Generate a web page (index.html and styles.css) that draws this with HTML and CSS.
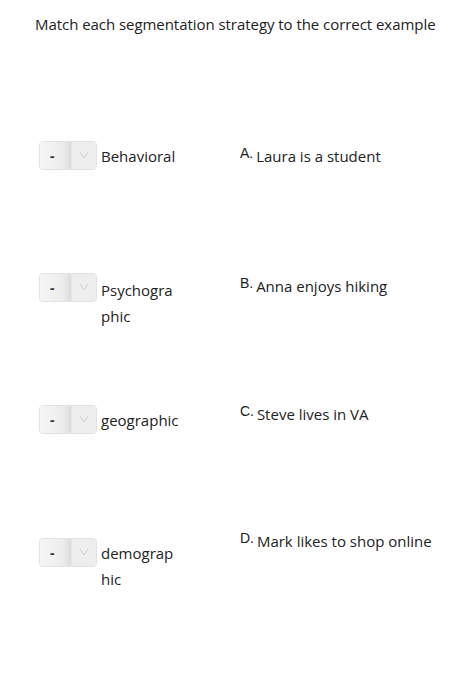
FILE: index.html
```html
<!DOCTYPE html>
<html>
<head>
<meta charset="utf-8">
<link rel="stylesheet" href="styles.css">
</head>
<body>
<div class="page">
  <h1 class="title">Match each segmentation strategy to the correct example</h1>
  <div class="rows">
    <div class="row row-1">
      <div class="select"><span class="select-value">-</span><span class="select-arrow"><svg width="10" height="8" viewBox="0 0 10 8"><polyline points="1,1 5,7 9,1" fill="none" stroke="#cfcfcf" stroke-width="1"/></svg></span></div>
      <div class="label">Behavioral</div>
      <div class="answer"><span class="letter">A.</span> Laura is a student</div>
    </div>
    <div class="row row-2">
      <div class="select"><span class="select-value">-</span><span class="select-arrow"><svg width="10" height="8" viewBox="0 0 10 8"><polyline points="1,1 5,7 9,1" fill="none" stroke="#cfcfcf" stroke-width="1"/></svg></span></div>
      <div class="label">Psychographic</div>
      <div class="answer"><span class="letter">B.</span> Anna enjoys hiking</div>
    </div>
    <div class="row row-3">
      <div class="select"><span class="select-value">-</span><span class="select-arrow"><svg width="10" height="8" viewBox="0 0 10 8"><polyline points="1,1 5,7 9,1" fill="none" stroke="#cfcfcf" stroke-width="1"/></svg></span></div>
      <div class="label">geographic</div>
      <div class="answer"><span class="letter">C.</span> Steve lives in VA</div>
    </div>
    <div class="row row-4">
      <div class="select"><span class="select-value">-</span><span class="select-arrow"><svg width="10" height="8" viewBox="0 0 10 8"><polyline points="1,1 5,7 9,1" fill="none" stroke="#cfcfcf" stroke-width="1"/></svg></span></div>
      <div class="label">demographic</div>
      <div class="answer"><span class="letter">D.</span> Mark likes to shop online</div>
    </div>
  </div>
</div>
</body>
</html>
```

FILE: styles.css
```css
html, body {
  margin: 0;
  padding: 0;
  background: #ffffff;
}

body {
  font-family: "Open Sans", "Noto Sans", sans-serif;
  color: #222222;
}

.page {
  padding: 14px 0 0 35px;
}

.title {
  margin: 0;
  font-size: 15px;
  line-height: 20px;
  font-weight: 400;
  color: #222222;
  letter-spacing: -0.05px;
}

.rows {
  margin-top: 107px;
  padding-left: 4px;
}

.row {
  display: flex;
  align-items: flex-start;
  height: 132px;
}

.row-3 {
  height: 133px;
}

.select {
  flex: none;
  display: flex;
  width: 58px;
  height: 29px;
  box-sizing: border-box;
  border: 1px solid #e2e2e2;
  border-radius: 4px;
  overflow: hidden;
}

.select-value {
  width: 31px;
  background: linear-gradient(to right, #f6f6f6 0%, #ececec 75%, #dcdcdc 100%);
  font-size: 14px;
  font-weight: 700;
  line-height: 27px;
  padding-left: 10px;
  box-sizing: border-box;
  color: #333333;
}

.select-arrow {
  flex: 1;
  display: flex;
  justify-content: center;
  align-items: flex-start;
  padding-top: 9px;
  background: #eeeeee;
  border-left: 1px solid #e6e6e6;
}

.label {
  flex: none;
  width: 78px;
  margin-left: 4px;
  margin-top: 2px;
  font-size: 15px;
  line-height: 26px;
  color: #222222;
  word-break: break-all;
}

.row-2 .label {
  margin-top: 4px;
}

.answer {
  margin-left: 61px;
  font-size: 15px;
  line-height: 20px;
  color: #222222;
  white-space: nowrap;
}

.letter {
  font-family: "Liberation Sans", Arial, sans-serif;
  font-size: 14px;
  position: relative;
  top: -4px;
  margin-right: -1px;
}

.row-1 .answer { margin-top: 5px; }
.row-2 .answer { margin-top: 3px; }
.row-3 .answer { margin-top: -1px; }
.row-4 .answer { margin-top: -7px; }
```
